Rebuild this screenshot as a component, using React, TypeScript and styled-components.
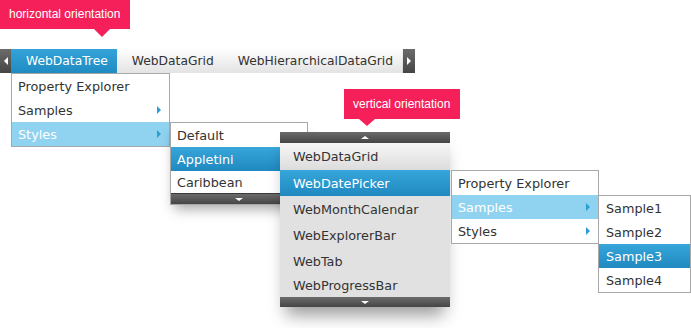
import React from 'react';
import styled, { createGlobalStyle, css } from 'styled-components';

type RowState = 'normal' | 'hover' | 'active';

const GlobalStyle = createGlobalStyle`
  html, body {
    margin: 0;
    padding: 0;
    background: #fff;
  }
  body {
    font-family: "DejaVu Sans", Verdana, sans-serif;
    font-size: 12.8px;
    color: #333;
  }
`;

const Stage = styled.div`
  position: relative;
  width: 691px;
  height: 328px;
  overflow: hidden;
`;

const Callout = styled.div<{ $x: number; $y: number; $h: number; $tail: number; $tailH: number }>`
  position: absolute;
  left: ${(p) => p.$x}px;
  top: ${(p) => p.$y}px;
  height: ${(p) => p.$h}px;
  line-height: ${(p) => p.$h}px;
  padding: 0 10px 0 9px;
  background: #f5205a;
  color: #fff;
  font-family: "Liberation Sans", Arial, sans-serif;
  font-size: 12px;
  white-space: nowrap;
  z-index: 20;
  &::after {
    content: '';
    position: absolute;
    left: ${(p) => p.$tail - 8}px;
    top: 100%;
    border-left: 8px solid transparent;
    border-right: 8px solid transparent;
    border-top: ${(p) => p.$tailH}px solid #f5205a;
  }
`;

/* ---------- horizontal bar ---------- */

const Bar = styled.nav`
  display: flex;
  width: 415px;
  height: 24px;
  margin-top: 49px;
  font-size: 12.3px;
  background: linear-gradient(#fefefe, #e3e3e3);
`;

const ScrollButton = styled.div<{ $w?: number; $h?: number }>`
  display: flex;
  align-items: center;
  justify-content: center;
  flex: none;
  width: ${(p) => (p.$w ? `${p.$w}px` : '100%')};
  height: ${(p) => (p.$h ? `${p.$h}px` : '100%')};
  background: linear-gradient(#6b6b6b, #454545);
`;

const Arrow = styled.span<{ $dir: 'left' | 'right' | 'up' | 'down'; $color?: string; $size?: number }>`
  display: block;
  width: 0;
  height: 0;
  ${(p) => {
    const s = p.$size ?? 4;
    const c = p.$color ?? '#fff';
    switch (p.$dir) {
      case 'left':
        return css`border-top: ${s}px solid transparent; border-bottom: ${s}px solid transparent; border-right: ${s}px solid ${c};`;
      case 'right':
        return css`border-top: ${s}px solid transparent; border-bottom: ${s}px solid transparent; border-left: ${s}px solid ${c};`;
      case 'up':
        return css`border-left: ${s}px solid transparent; border-right: ${s}px solid transparent; border-bottom: ${s - 1}px solid ${c};`;
      default:
        return css`border-left: ${s}px solid transparent; border-right: ${s}px solid transparent; border-top: ${s - 1}px solid ${c};`;
    }
  }}
`;

const BarItem = styled.div<{ $selected?: boolean }>`
  display: flex;
  align-items: center;
  padding: 0 9px 0 15px;
  white-space: nowrap;
  color: ${(p) => (p.$selected ? '#fff' : '#333')};
  background: ${(p) => (p.$selected ? 'linear-gradient(#34a3d8, #1f8bc2)' : 'transparent')};
`;

const BarFill = styled.div`
  flex: 1;
  background: linear-gradient(#f4f4f4, #d6d6d6);
`;

/* ---------- drop-down panels ---------- */

const Panel = styled.div<{ $x: number; $y: number; $w: number; $z: number; $shadow?: boolean }>`
  position: absolute;
  left: ${(p) => p.$x}px;
  top: ${(p) => p.$y}px;
  width: ${(p) => p.$w}px;
  z-index: ${(p) => p.$z};
  box-sizing: border-box;
  background: #fff;
  border: 1px solid #a8a8a8;
  ${(p) => p.$shadow && css`box-shadow: 0 8px 12px -4px rgba(0, 0, 0, 0.35);`}
`;

const Row = styled.div<{ $state?: RowState; $h?: number; $pad?: number }>`
  display: flex;
  align-items: center;
  justify-content: space-between;
  height: ${(p) => p.$h ?? 24}px;
  padding: 0 8px 0 ${(p) => p.$pad ?? 6}px;
  white-space: nowrap;
  color: #333;
  ${(p) =>
    p.$state === 'hover' &&
    css`
      background: #8fd3f0;
      color: #fff;
    `}
  ${(p) =>
    p.$state === 'active' &&
    css`
      background: linear-gradient(#37a6da, #1f89c0);
      color: #fff;
    `}
`;

const RowScroll = styled(ScrollButton)`
  border-top: 1px solid #3a3a3a;
`;

/* ---------- vertical menu ---------- */

const VerticalMenu = styled.div`
  position: absolute;
  left: 280px;
  top: 132px;
  width: 170px;
  z-index: 10;
  background: #e1e1e1;
  box-shadow: 0 14px 16px -6px rgba(0, 0, 0, 0.4);
`;

const VRow = styled.div<{ $state?: RowState; $h?: number }>`
  display: flex;
  align-items: center;
  height: ${(p) => p.$h ?? 26}px;
  padding-left: 13px;
  color: #333;
  white-space: nowrap;
  ${(p) =>
    p.$state === 'hover' &&
    css`
      background: linear-gradient(#f7f7f7, #dcdcdc);
    `}
  ${(p) =>
    p.$state === 'active' &&
    css`
      background: linear-gradient(#37a6da, #1f89c0);
      color: #fff;
    `}
`;

const SubArrow = () => <Arrow $dir="right" $color="#2a9fd6" $size={4} />;

export default function App() {
  return (
    <Stage>
      <GlobalStyle />

      <Callout $x={0} $y={0} $h={29} $tail={102} $tailH={8}>
        horizontal orientation
      </Callout>

      <Bar>
        <ScrollButton $w={11}>
          <Arrow $dir="left" $size={4} />
        </ScrollButton>
        <BarItem $selected>WebDataTree</BarItem>
        <BarItem>WebDataGrid</BarItem>
        <BarItem>WebHierarchicalDataGrid</BarItem>
        <BarFill />
        <ScrollButton $w={12}>
          <Arrow $dir="right" $size={4} />
        </ScrollButton>
      </Bar>

      <Panel $x={11} $y={73} $w={159} $z={2}>
        <Row>Property Explorer</Row>
        <Row>
          Samples
          <SubArrow />
        </Row>
        <Row $state="hover">
          Styles
          <SubArrow />
        </Row>
      </Panel>

      <Panel $x={170} $y={122} $w={138} $z={3} $shadow>
        <Row $h={24}>Default</Row>
        <Row $state="active">Appletini</Row>
        <Row $h={22}>Caribbean</Row>
        <RowScroll $h={10}>
          <Arrow $dir="down" $size={4} />
        </RowScroll>
      </Panel>

      <Callout $x={344} $y={89} $h={30} $tail={23} $tailH={7}>
        vertical orientation
      </Callout>

      <VerticalMenu>
        <ScrollButton $h={11}>
          <Arrow $dir="up" $size={4} />
        </ScrollButton>
        <VRow $state="hover" $h={27}>WebDataGrid</VRow>
        <VRow $state="active">WebDatePicker</VRow>
        <VRow>WebMonthCalendar</VRow>
        <VRow>WebExplorerBar</VRow>
        <VRow>WebTab</VRow>
        <VRow $h={23}>WebProgressBar</VRow>
        <ScrollButton $h={10}>
          <Arrow $dir="down" $size={4} />
        </ScrollButton>
      </VerticalMenu>

      <Panel $x={451} $y={170} $w={148} $z={11}>
        <Row $h={24}>Property Explorer</Row>
        <Row $state="hover">
          Samples
          <SubArrow />
        </Row>
        <Row>
          Styles
          <SubArrow />
        </Row>
      </Panel>

      <Panel $x={598} $y={195} $w={93} $z={12}>
        <Row $pad={7}>Sample1</Row>
        <Row $pad={7}>Sample2</Row>
        <Row $pad={7} $state="active">
          Sample3
        </Row>
        <Row $pad={7}>Sample4</Row>
      </Panel>
    </Stage>
  );
}
